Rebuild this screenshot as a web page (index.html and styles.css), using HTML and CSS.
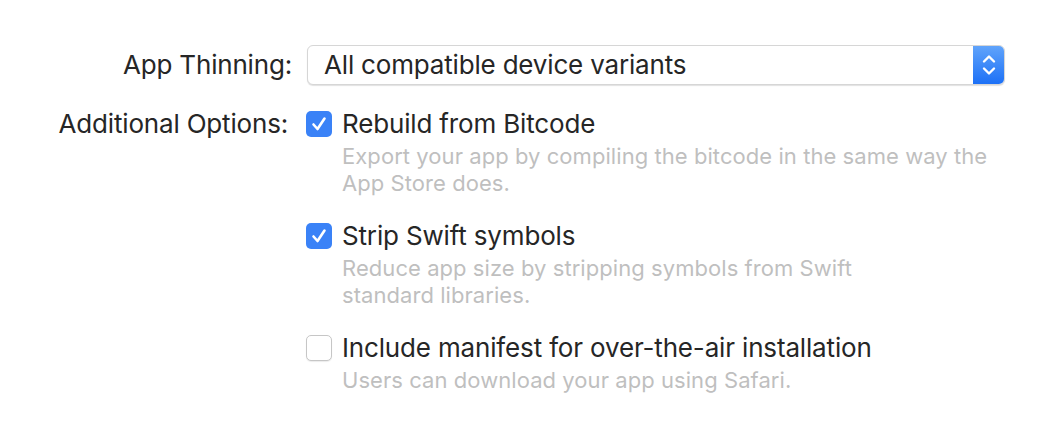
FILE: index.html
```html
<!DOCTYPE html>
<html>
<head>
<meta charset="utf-8">
<link rel="stylesheet" href="styles.css">
</head>
<body>
<div class="form">
  <div class="label label-select">App Thinning:</div>
  <div class="select">
    <span class="select-text">All compatible device variants</span>
    <span class="stepper">
      <svg width="32" height="40" viewBox="0 0 32 40">
        <path d="M11 16.5 L16 11.5 L21 16.5" fill="none" stroke="#fff" stroke-width="2.4" stroke-linecap="round" stroke-linejoin="round"/>
        <path d="M11 23.5 L16 28.5 L21 23.5" fill="none" stroke="#fff" stroke-width="2.4" stroke-linecap="round" stroke-linejoin="round"/>
      </svg>
    </span>
  </div>

  <div class="label label-options">Additional Options:</div>
  <div class="options">
    <div class="option">
      <span class="box checked">
        <svg width="26" height="26" viewBox="0 0 26 26"><path d="M7.5 13.5 L11.5 18 L18.5 7.5" fill="none" stroke="#fff" stroke-width="2.6" stroke-linecap="round" stroke-linejoin="round"/></svg>
      </span>
      <div class="option-body">
        <div class="title">Rebuild from Bitcode</div>
        <div class="desc">Export your app by compiling the bitcode in the same way the<br>App Store does.</div>
      </div>
    </div>
    <div class="option">
      <span class="box checked">
        <svg width="26" height="26" viewBox="0 0 26 26"><path d="M7.5 13.5 L11.5 18 L18.5 7.5" fill="none" stroke="#fff" stroke-width="2.6" stroke-linecap="round" stroke-linejoin="round"/></svg>
      </span>
      <div class="option-body">
        <div class="title">Strip Swift symbols</div>
        <div class="desc">Reduce app size by stripping symbols from Swift<br>standard libraries.</div>
      </div>
    </div>
    <div class="option">
      <span class="box"></span>
      <div class="option-body">
        <div class="title">Include manifest for over-the-air installation</div>
        <div class="desc">Users can download your app using Safari.</div>
      </div>
    </div>
  </div>
</div>
</body>
</html>
```

FILE: styles.css
```css
html, body {
  margin: 0;
  padding: 0;
  background: #ffffff;
}
body {
  width: 1038px;
  height: 428px;
  font-family: "Inter", "Liberation Sans", sans-serif;
  color: #262626;
  -webkit-font-smoothing: antialiased;
}
.form {
  display: grid;
  grid-template-columns: 292px 698px;
  column-gap: 15px;
  row-gap: 24px;
  padding-top: 45px;
}
.label {
  text-align: right;
  font-size: 26px;
  line-height: 30px;
  letter-spacing: -0.18px;
  white-space: nowrap;
}
.label-select {
  align-self: center;
}
.label-options {
  margin-right: 4px;
}
.select {
  height: 40px;
  box-sizing: border-box;
  border: 1px solid #d6d6d6;
  border-radius: 6px;
  box-shadow: 0 1px 1px rgba(0,0,0,0.12);
  display: flex;
  align-items: stretch;
  overflow: hidden;
  background: #fff;
}
.select-text {
  flex: 1;
  font-size: 26px;
  line-height: 38px;
  letter-spacing: -0.18px;
  padding-left: 16px;
}
.stepper {
  width: 32px;
  margin: -1px -1px -1px 0;
  background: linear-gradient(#62a5fb, #1b6ff6);
  display: flex;
  align-items: center;
  justify-content: center;
}
.options {
  display: flex;
  flex-direction: column;
  gap: 24px;
}
.option {
  display: flex;
  gap: 10px;
  align-items: flex-start;
}
.box {
  width: 26px;
  height: 26px;
  margin-top: 2px;
  box-sizing: border-box;
  border-radius: 5px;
  border: 1px solid #c6c6c6;
  background: #fff;
  box-shadow: 0 1px 1px rgba(0,0,0,0.08);
  flex: none;
  margin-left: -1px;
}
.box.checked {
  border: none;
  background: #3a82f7;
  box-shadow: none;
}
.box svg {
  display: block;
}
.title {
  font-size: 26px;
  line-height: 30px;
  letter-spacing: -0.16px;
  color: #262626;
}
.desc {
  margin-top: 4px;
  font-size: 22px;
  line-height: 27px;
  letter-spacing: 0.06px;
  color: #bfbfbf;
}
```
